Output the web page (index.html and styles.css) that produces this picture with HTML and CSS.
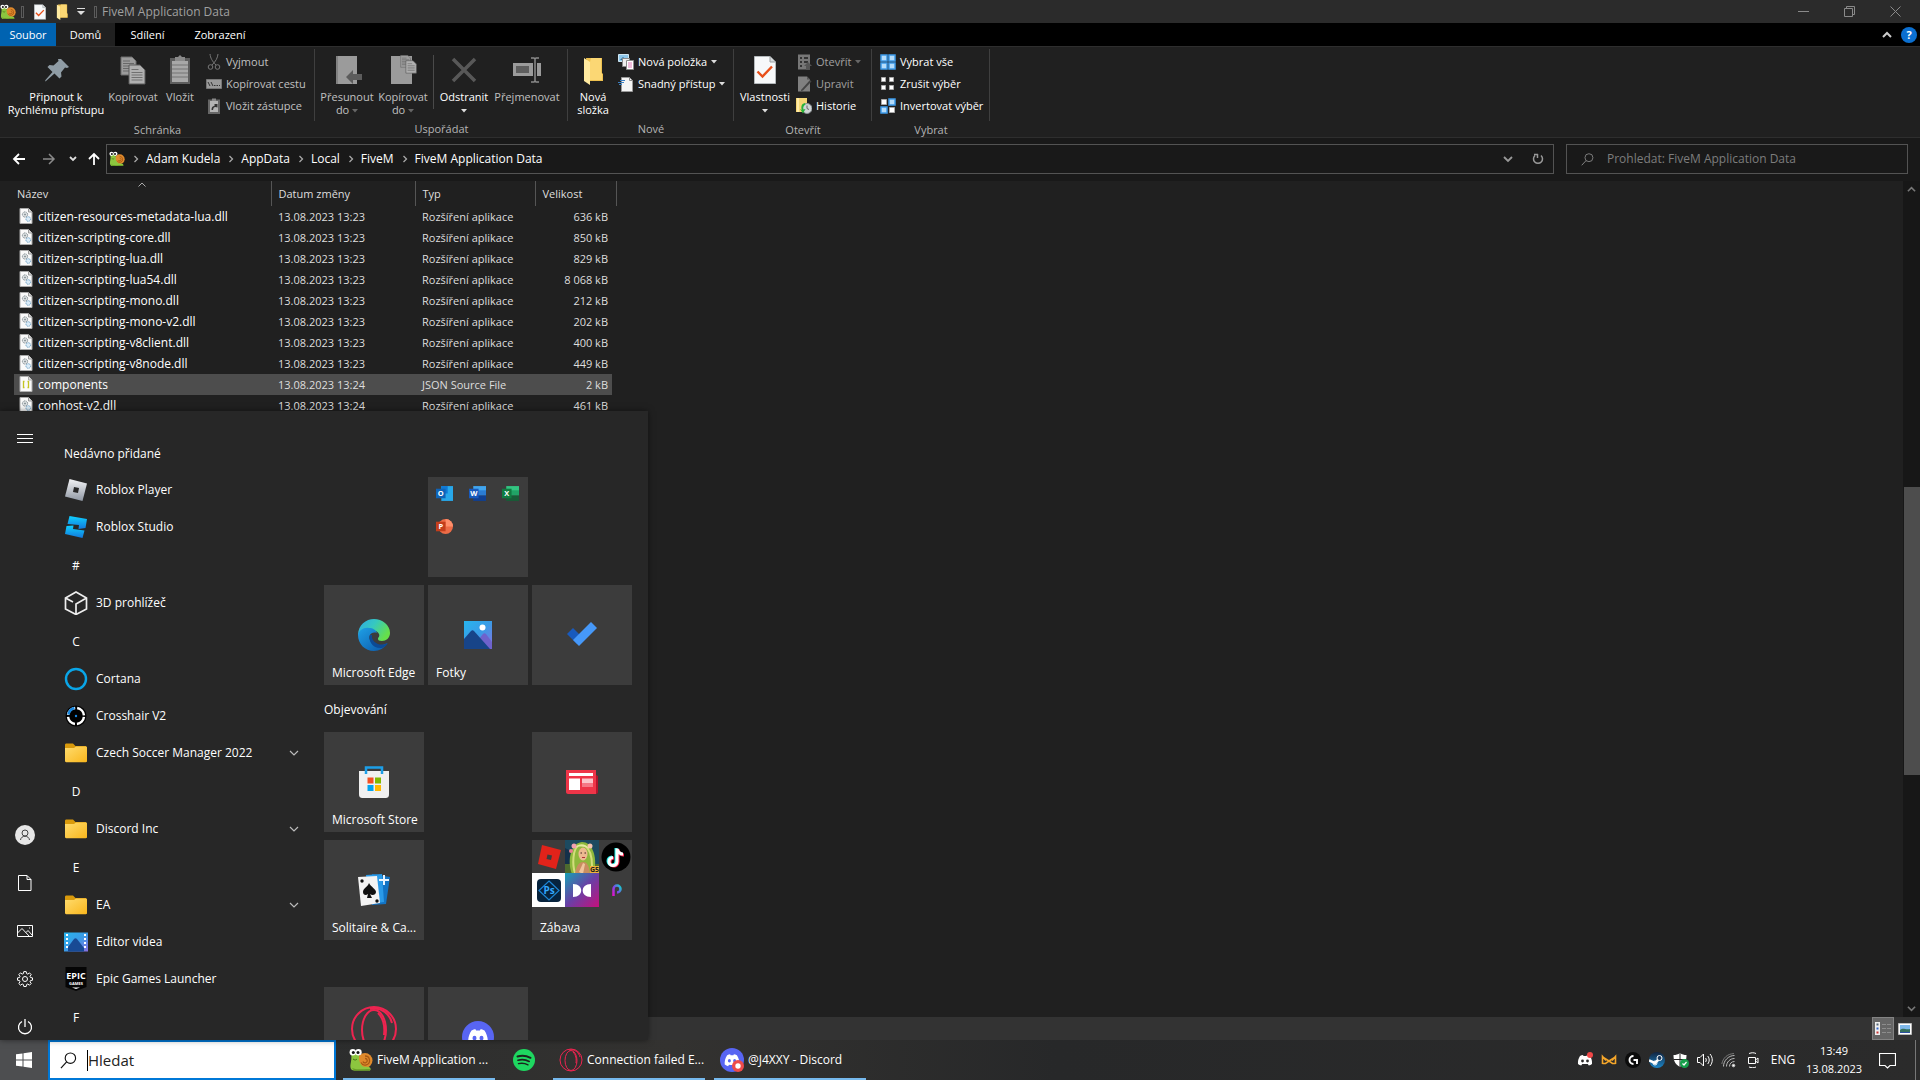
FILE: index.html
```html
<!DOCTYPE html>
<html lang="cs">
<head>
  <meta charset="UTF-8" />
  <meta name="viewport" content="width=device-width, initial-scale=1.0" />
  <title>FiveM Application Data</title>
  <link rel="stylesheet" href="styles.css">
</head>
<body>
  <!-- shared icons -->
  <svg class="defs" width="0" height="0" aria-hidden="true">
    <defs>
      <linearGradient id="gFolder" x1="0" y1="0" x2="1" y2="1"><stop offset="0" stop-color="#ffdc6e" /><stop offset="1" stop-color="#f9b61c" /></linearGradient>
      <linearGradient id="gSilver" x1="0" y1="0" x2="0" y2="1"><stop offset="0" stop-color="#f2f3f5" /><stop offset="1" stop-color="#8f97a3" /></linearGradient>
      <linearGradient id="gStudio" x1="0" y1="0" x2="0" y2="1"><stop offset="0" stop-color="#10d0ff" /><stop offset="1" stop-color="#1278dc" /></linearGradient>
      <linearGradient id="gPhoto" x1="0" y1="0" x2="1" y2="1"><stop offset="0" stop-color="#27b5ee" /><stop offset="0.5" stop-color="#3a9be6" /><stop offset="1" stop-color="#8a6fe0" /></linearGradient>
      <linearGradient id="gEdgeTop" x1="0" y1="0" x2="1" y2="0.5"><stop offset="0" stop-color="#2ea8e8" /><stop offset="0.5" stop-color="#36c8c0" /><stop offset="1" stop-color="#66e04a" /></linearGradient>
      <linearGradient id="gEdgeLow" x1="0" y1="0" x2="1" y2="1"><stop offset="0" stop-color="#1fa0e6" /><stop offset="1" stop-color="#0b57a8" /></linearGradient>
      <linearGradient id="gDolby" x1="0" y1="0" x2="1" y2="1"><stop offset="0" stop-color="#16a0b4" /><stop offset="0.5" stop-color="#6a3fa5" /><stop offset="1" stop-color="#c4107c" /></linearGradient>
      <linearGradient id="gPicsart" x1="0" y1="1" x2="1" y2="0"><stop offset="0" stop-color="#e411c8" /><stop offset="0.5" stop-color="#7a4be8" /><stop offset="1" stop-color="#10d4d0" /></linearGradient>
      <linearGradient id="gSteam" x1="0" y1="0" x2="0" y2="1"><stop offset="0" stop-color="#12243f" /><stop offset="1" stop-color="#1c86c8" /></linearGradient>
    </defs>
    <symbol id="snail" viewBox="0 0 24 24">
      <circle cx="16" cy="12.500" r="7.500" fill="#e08a2c" />
      <path d="M16 8a4.500 4.500 0 1 1-4 6.500M16 10.500a2.200 2.200 0 1 1-2 3" fill="none" stroke="#a85a14" stroke-width="1.300" />
      <path d="M2 5h8v5c0 3 1 6 4 8.500l6 .5c2 .5 2 3 1 3.500H5c-3 0-4-3-3.500-6C2 13 3 10 2 5z" fill="#8cc63f" />
      <path d="M3 20c4 2 9 1 18 1v1.500H5z" fill="#6aa028" />
      <circle cx="3.800" cy="4.200" r="3.200" fill="#fff" /><circle cx="9.500" cy="4.200" r="3.200" fill="#fff" />
      <circle cx="4.300" cy="4.400" r="1.500" fill="#111" /><circle cx="9" cy="4.400" r="1.500" fill="#111" />
      <path d="M4 11c2 1.500 3 1 4 0" stroke="#416b12" fill="none" />
    </symbol>
    <symbol id="docCheck" viewBox="0 0 22 28">
      <path d="M.5.500h15.500l5.500 5.500v21.500H.5z" fill="#f7f9fa" stroke="#b4b9bc" />
      <path d="M16 .5V6h5.500" fill="#d8dcde" stroke="#9aa0a3" />
      <path d="M3.500 15.500l5 5 9.500-10" fill="none" stroke="#e8501a" stroke-width="2.400" />
    </symbol>
    <symbol id="newFolder" viewBox="0 0 20 28">
      <path d="M3 1h16v15l1 1v7H6z" fill="#eec14f" />
      <path d="M1 1l6 4v23L1 24z" fill="#ffeaa0" /><path d="M7 5l1-4h10v14l1 2v6H7z" fill="#fbd774" />
    </symbol>
    <symbol id="dll" viewBox="0 0 13 16">
      <path d="M.5.500h8.500l3.500 3.500v11.500H.5z" fill="#fafafa" stroke="#a9a9a9" />
      <path d="M9 .5V4h3.500" fill="#ddd" stroke="#999" />
      <circle cx="5.500" cy="6.500" r="2.600" fill="#dfe3e5" stroke="#7b868c" stroke-dasharray="1.200 .6" />
      <circle cx="8.800" cy="11" r="2.300" fill="#dcecf8" stroke="#6ba0c6" stroke-dasharray="1.200 .6" />
      <path d="M4.500 6.500h2M5.500 5.500v2" stroke="#7b868c" stroke-width=".7" />
    </symbol>
    <symbol id="json" viewBox="0 0 13 16">
      <path d="M.5.500h8.500l3.500 3.500v11.500H.5z" fill="#fafafa" stroke="#b0b0b0" />
      <path d="M9 .5V4h3.500" fill="#ddd" stroke="#aaa" />
      <path d="M5 5.500H4v6h1M8 5.500h1v6H8" fill="none" stroke="#c3c421" stroke-width="1.300" />
    </symbol>
    <symbol id="crumb" viewBox="0 0 8 8"><path d="M2.500 1l3 3-3 3" fill="none" stroke="#a8a8a8" stroke-width="1.300" /></symbol>
    <symbol id="down" viewBox="0 0 10 10"><path d="M1 3l4 4 4-4" fill="none" stroke="currentColor" stroke-width="1.200" /></symbol>
    <symbol id="tri" viewBox="0 0 6 4"><path d="M0 0h6L3 3.500z" fill="currentColor" /></symbol>
    <symbol id="pages" viewBox="0 0 26 30">
      <path d="M1 2h11l4 4v14H1z" fill="#9c9c9c" stroke="#6d6d6d" /><path d="M3 6h7M3 8.500h11M3 11h11M3 13.500h11M3 16h11" stroke="#686868" />
      <path d="M9 10h11l5 5v14H9z" fill="#b0b0b0" stroke="#5a5a5a" /><path d="M11.500 14.500h7M11.500 17.500h11M11.500 20h11M11.500 22.500h11M11.500 25h11" stroke="#707070" />
    </symbol>
    <symbol id="folder" viewBox="0 0 24 24">
      <path d="M1 4c0-1 .5-1.500 1.500-1.500h6.500l2.500 2.500H22v5H1z" fill="#d99a0c" />
      <path d="M1 7h9l2-1.500h10c.7 0 1 .4 1 1V20c0 .8-.5 1.200-1.200 1.200H2.200C1.500 21.200 1 20.800 1 20z" fill="url(#gFolder)" />
    </symbol>
    <symbol id="discord" viewBox="0 0 32 32">
      <circle cx="16" cy="16" r="16" fill="#5865f2" />
      <path d="M9.500 9.500c1.500-.8 3-1.100 4-1.200l.6 1.200h3.800l.6-1.200c1 .1 2.500.4 4 1.200 2.600 4 3.600 8 3.200 12.500-1.600 1.200-3 1.800-4.500 2.200l-1.200-2c-2.600.7-5.400.7-8 0l-1.200 2c-1.500-.4-2.900-1-4.500-2.200-.4-4.500.6-8.500 3.200-12.500z" fill="#fff" />
      <ellipse cx="12.500" cy="17" rx="2" ry="2.300" fill="#5865f2" /><ellipse cx="19.500" cy="17" rx="2" ry="2.300" fill="#5865f2" />
    </symbol>
    <symbol id="opera" viewBox="0 0 48 48">
      <g fill="none" stroke="#ee2450" stroke-width="2"><circle cx="24" cy="24" r="22" /><ellipse cx="24" cy="25" rx="12" ry="20" /><path d="M20 4c12-3 20 6 22 14M28 8c6 6 7 14 6 22" /></g>
    </symbol>
    <symbol id="search" viewBox="0 0 18 18"><circle cx="11" cy="6.500" r="5.500" fill="none" stroke="currentColor" stroke-width="1.200" /><path d="M7 10.500L1 17" stroke="currentColor" stroke-width="1.300" /></symbol>
  </svg>

  <main class="window">
    <header class="titlebar">
      <svg class="i16"><use href="#snail" /></svg>
      <span class="bar"></span>
      <button class="quick" aria-label="Vlastnosti"><svg width="12" height="16"><use href="#docCheck" /></svg></button>
      <button class="quick" aria-label="Nová složka"><svg width="14" height="16"><use href="#newFolder" /></svg></button>
      <button class="quick quick-more" aria-label="Přizpůsobit"><svg width="8" height="7" viewBox="0 0 8 7"><path d="M0 .5h8" stroke="#ddd" /><path d="M0 3h8L4 7z" fill="#ddd" /></svg></button>
      <span class="bar"></span>
      <h1>FiveM Application Data</h1>
      <div class="controls">
        <button aria-label="Minimalizovat"><svg width="11" height="11" viewBox="0 0 11 11"><path d="M0 5.500h11" stroke="#8a8a8a" /></svg></button>
        <button aria-label="Obnovit"><svg width="11" height="11" viewBox="0 0 11 11" fill="none" stroke="#8a8a8a"><path d="M.5 2.500h8v8h-8zM2.500 2.500v-2h8v8h-2" /></svg></button>
        <button aria-label="Zavřít"><svg width="11" height="11" viewBox="0 0 11 11"><path d="M.5.500l10 10M10.500.500l-10 10" stroke="#8a8a8a" /></svg></button>
      </div>
    </header>

    <nav class="tabs">
      <button class="tab tab-file">Soubor</button>
      <button class="tab tab-active">Domů</button>
      <button class="tab">Sdílení</button>
      <button class="tab tab-wide">Zobrazení</button>
      <div class="tabs-end">
        <button aria-label="Sbalit pás karet"><svg width="10" height="8" viewBox="0 0 10 8"><path d="M1 6l4-4 4 4" fill="none" stroke="#ccc" stroke-width="2" /></svg></button>
        <button class="help" aria-label="Nápověda">?</button>
      </div>
    </nav>

    <section class="ribbon">
      <div class="group g-clipboard">
        <div class="tools">
          <button class="big w-pin on"><svg viewBox="0 0 32 32"><path d="M21 5l8 8-2 1-2-.5-4 5 .5 4-2 2-5-5L6 27l-1 .5.5-1.500 7-8-5-5 2-2 4 .5 5-4.500-.5-2z" fill="#8f9ca5" /></svg><span>Připnout k<br>Rychlému přístupu</span></button>
          <button class="big w-copy"><svg viewBox="0 0 32 32"><use href="#pages" x="3" y="1" width="26" height="30" /></svg><span>Kopírovat</span></button>
          <button class="big w-paste"><svg viewBox="0 0 32 32"><path d="M6 4h20v26H6z" fill="#5d5d5d" /><path d="M8 7h16v21H8z" fill="#a8a8a8" /><path d="M11 3h3l2-2 2 2h3v4H11z" fill="#8a8a8a" /><path d="M8 11h16M8 15h16M8 19h16M8 23h16" stroke="#747474" /></svg><span>Vložit</span></button>
          <div class="stack">
            <button class="small"><svg viewBox="0 0 16 16" fill="none" stroke="#777"><path d="M4 0c.5 4 2 7 6 11M12 0c-.5 4-2 7-6 11" /><circle cx="4.500" cy="13" r="2.300" /><circle cx="11.500" cy="13" r="2.300" /></svg>Vyjmout</button>
            <button class="small"><svg viewBox="0 0 16 16"><path d="M.5 3.500h15v9H.5z" fill="#9a9a9a" stroke="#777" /><path d="M2 6l2 4M5 6l2 4M8 9.500h1.500M10.500 9.500H12M13 9.500h1" stroke="#333" /></svg>Kopírovat cestu</button>
            <button class="small"><svg viewBox="0 0 16 16"><path d="M2 1.500h12V16H2z" fill="#666" /><path d="M4 3h8v11H4z" fill="#b4b4b4" /><path d="M6 .5h4V3H6z" fill="#888" /><path d="M5.500 12c0-3 1-4 3-4V6l3 0v3.500L9.500 9c-2 0-2 1-2.500 3z" fill="#333" /></svg>Vložit zástupce</button>
          </div>
        </div>
        <p>Schránka</p>
      </div>

      <div class="group g-organize">
        <div class="tools">
          <button class="big w-move"><svg viewBox="0 0 32 32"><path d="M5 2h21v28H5z" fill="#9b9b9b" /><path d="M5 2h2v28H5z" fill="#828282" /><path d="M15 23l7-7v4h9v6h-9v4z" fill="#5c5c5c" /></svg><span>Přesunout<br>do <svg class="tri"><use href="#tri" /></svg></span></button>
          <button class="big w-move"><svg viewBox="0 0 32 32"><path d="M4 2h21v28H4z" fill="#9b9b9b" /><use href="#pages" x="13" y="0" width="17" height="20" /></svg><span>Kopírovat<br>do <svg class="tri"><use href="#tri" /></svg></span></button>
          <span class="split"></span>
          <button class="big w-move on"><svg viewBox="0 0 32 32"><path d="M5 5l22 22M27 5L5 27" stroke="#585858" stroke-width="3.500" /></svg><span>Odstranit<br><svg class="tri"><use href="#tri" /></svg></span></button>
          <button class="big w-rename"><svg viewBox="0 0 32 32"><path d="M2 9h20v13H2zM26 9h4v13h-4z" fill="#9b9b9b" /><path d="M5 12h13v7H5z" fill="#5e5e5e" /><path d="M20 4h3l1 1 1-1h3M20 28h3l1-1 1 1h3M24 5v22" fill="none" stroke="#8a8a8a" stroke-width="1.500" /></svg><span>Přejmenovat</span></button>
        </div>
        <p>Uspořádat</p>
      </div>

      <div class="group g-new">
        <div class="tools">
          <button class="big w-new on"><svg viewBox="0 0 32 32"><use href="#newFolder" x="6" y="3" width="20" height="28" /></svg><span>Nová<br>složka</span></button>
          <div class="stack">
            <button class="small on"><svg viewBox="0 0 16 16"><path d="M.5.500h10v7H.5z" fill="#8ec7ea" stroke="#cfe6f3" /><path d="M2 6l3-3 3 3z" fill="#2b6d97" /><path d="M4.500 4.500h7v8h-7z" fill="#eee" stroke="#8a8a8a" /><path d="M8.500 6.500h7v9h-7z" fill="#fff" stroke="#8a8a8a" /><path d="M10 9h4M10 11h4M10 13h4" stroke="#c28" stroke-width=".6" /></svg>Nová položka <svg class="tri"><use href="#tri" /></svg></button>
            <button class="small on"><svg viewBox="0 0 16 16"><path d="M3.500 1.500h8l3 3v11h-11z" fill="#f5f5f5" stroke="#999" /><path d="M11.500 1.500v3h3" fill="none" stroke="#888" /><path d="M2 4.500h5M0 6.500h6M1 8.500h3" stroke="#3c7fc0" /></svg>Snadný přístup <svg class="tri"><use href="#tri" /></svg></button>
          </div>
        </div>
        <p>Nové</p>
      </div>

      <div class="group g-open">
        <div class="tools">
          <button class="big w-props on"><svg viewBox="0 0 32 32"><use href="#docCheck" x="5" y="2" width="22" height="28" /></svg><span>Vlastnosti<br><svg class="tri"><use href="#tri" /></svg></span></button>
          <div class="stack">
            <button class="small off"><svg viewBox="0 0 16 16"><path d="M2 .5h12v15H2z" fill="#777" /><path d="M4 3h2v2H4zM4 7h2v2H4zM4 11h2v2H4zM8 3h4v2H8zM8 7h4v2H8z" fill="#333" /><path d="M12 8l4 4h-2v4h-4v-4H8z" fill="#555" /></svg>Otevřít <svg class="tri"><use href="#tri" /></svg></button>
            <button class="small off"><svg viewBox="0 0 16 16"><path d="M2 .5h9l3 3v12H2z" fill="#808080" /><path d="M11 .5v3h3" fill="#555" /><path d="M5 14l9-10 1.500 1.500L7 14.500l-2 .5z" fill="#444" /></svg>Upravit</button>
            <button class="small on"><svg viewBox="0 0 16 16"><path d="M0 0h11v14H0z" fill="#f5d675" /><path d="M1 0h2v14H1z" fill="#ffeaa5" /><circle cx="11" cy="10.500" r="5" fill="#cfd4d6" stroke="#8b9194" /><path d="M11 7.500v3l2 1" fill="none" stroke="#666" /><path d="M9 5c-4 1-4 4-3 7l-2-1 3 4.500L9.500 11l-2 .5c-.7-2 0-4 2-5z" fill="#29b33b" /></svg>Historie</button>
          </div>
        </div>
        <p>Otevřít</p>
      </div>

      <div class="group g-select">
        <div class="tools">
          <div class="stack">
            <button class="small on"><svg viewBox="0 0 16 16" fill="#b5dcfa" stroke="#3d9bea" stroke-width="1.500"><path d="M1 1h6v6H1zM9 1h6v6H9zM1 9h6v6H1zM9 9h6v6H9z" /></svg>Vybrat vše</button>
            <button class="small on"><svg viewBox="0 0 16 16" fill="#fff" stroke="#aaa"><path d="M1.500 1.500h4v4h-4zM9.500 1.500h4v4h-4zM1.500 9.500h4v4h-4zM9.500 9.500h4v4h-4z" /></svg>Zrušit výběr</button>
            <button class="small on"><svg viewBox="0 0 16 16"><path d="M1.500 1.500h5v5h-5zM9.500 9.500h5v5h-5z" fill="#fff" stroke="#aaa" /><path d="M9 1h6v6H9zM1 9h6v6H1z" fill="#b5dcfa" stroke="#3d9bea" stroke-width="1.500" /></svg>Invertovat výběr</button>
          </div>
        </div>
        <p>Vybrat</p>
      </div>
    </section>

    <section class="address">
      <div class="nav-buttons">
        <button aria-label="Zpět"><svg width="14" height="14" viewBox="0 0 14 14"><path d="M13 7H2M7 2L2 7l5 5" fill="none" stroke="#fff" stroke-width="1.800" /></svg></button>
        <button aria-label="Vpřed"><svg width="14" height="14" viewBox="0 0 14 14"><path d="M1 7h11M7 2l5 5-5 5" fill="none" stroke="#8a8a8a" stroke-width="1.500" /></svg></button>
        <button class="recent" aria-label="Poslední umístění"><svg width="8" height="8" viewBox="0 0 8 8"><path d="M1 2l3 3 3-3" fill="none" stroke="#ddd" stroke-width="1.800" /></svg></button>
        <button class="up" aria-label="Nahoru"><svg width="14" height="14" viewBox="0 0 14 14"><path d="M7 13V2M2 7l5-5 5 5" fill="none" stroke="#fff" stroke-width="1.800" /></svg></button>
      </div>
      <div class="path">
        <svg class="i16"><use href="#snail" /></svg>
        <svg class="sep"><use href="#crumb" /></svg><button>Adam Kudela</button>
        <svg class="sep"><use href="#crumb" /></svg><button>AppData</button>
        <svg class="sep"><use href="#crumb" /></svg><button>Local</button>
        <svg class="sep"><use href="#crumb" /></svg><button>FiveM</button>
        <svg class="sep"><use href="#crumb" /></svg><button>FiveM Application Data</button>
        <div class="path-end">
          <button aria-label="Předchozí umístění"><svg width="10" height="10" viewBox="0 0 10 10"><path d="M1 3l4 4 4-4" fill="none" stroke="#999" stroke-width="1.800" /></svg></button>
          <button aria-label="Aktualizovat"><svg width="12" height="12" viewBox="0 0 12 12"><path d="M3 2.500a4.500 4.500 0 1 0 6 0M2 1.500h4M5.500 1v4" fill="none" stroke="#999" stroke-width="1.500" /></svg></button>
        </div>
      </div>
      <label class="filter">
        <svg width="13" height="13"><use href="#search" /></svg>
        <input type="search" placeholder="Prohledat: FiveM Application Data" aria-label="Prohledat: FiveM Application Data">
      </label>
    </section>

    <section class="content">
      <div class="files">
        <table>
          <colgroup><col class="c-name"><col class="c-date"><col class="c-type"><col class="c-size"><col class="c-end"></colgroup>
          <thead>
            <tr><th><svg class="sort" viewBox="0 0 8 5"><path d="M.5 4.500L4 1l3.500 3.500" fill="none" stroke="#aaa" /></svg>Název</th><th>Datum změny</th><th>Typ</th><th colspan="2">Velikost</th></tr>
          </thead>
          <tbody>
            <tr><td><svg><use href="#dll" /></svg>citizen-resources-metadata-lua.dll</td><td>13.08.2023 13:23</td><td>Rozšíření aplikace</td><td>636 kB</td></tr>
            <tr><td><svg><use href="#dll" /></svg>citizen-scripting-core.dll</td><td>13.08.2023 13:23</td><td>Rozšíření aplikace</td><td>850 kB</td></tr>
            <tr><td><svg><use href="#dll" /></svg>citizen-scripting-lua.dll</td><td>13.08.2023 13:23</td><td>Rozšíření aplikace</td><td>829 kB</td></tr>
            <tr><td><svg><use href="#dll" /></svg>citizen-scripting-lua54.dll</td><td>13.08.2023 13:23</td><td>Rozšíření aplikace</td><td>8 068 kB</td></tr>
            <tr><td><svg><use href="#dll" /></svg>citizen-scripting-mono.dll</td><td>13.08.2023 13:23</td><td>Rozšíření aplikace</td><td>212 kB</td></tr>
            <tr><td><svg><use href="#dll" /></svg>citizen-scripting-mono-v2.dll</td><td>13.08.2023 13:23</td><td>Rozšíření aplikace</td><td>202 kB</td></tr>
            <tr><td><svg><use href="#dll" /></svg>citizen-scripting-v8client.dll</td><td>13.08.2023 13:23</td><td>Rozšíření aplikace</td><td>400 kB</td></tr>
            <tr><td><svg><use href="#dll" /></svg>citizen-scripting-v8node.dll</td><td>13.08.2023 13:23</td><td>Rozšíření aplikace</td><td>449 kB</td></tr>
            <tr class="selected"><td><svg><use href="#json" /></svg>components</td><td>13.08.2023 13:24</td><td>JSON Source File</td><td>2 kB</td></tr>
            <tr><td><svg><use href="#dll" /></svg>conhost-v2.dll</td><td>13.08.2023 13:24</td><td>Rozšíření aplikace</td><td>461 kB</td></tr>
          </tbody>
        </table>
      </div>
      <div class="scrollbar">
        <svg viewBox="0 0 10 10"><path d="M1 7l4-4 4 4" fill="none" stroke="#777" stroke-width="1.800" /></svg>
        <div class="track"><div class="thumb"></div></div>
        <svg viewBox="0 0 10 10"><path d="M1 3l4 4 4-4" fill="none" stroke="#777" stroke-width="1.800" /></svg>
      </div>
    </section>

    <footer class="status">
      <button class="view view-active" aria-label="Podrobnosti"><svg width="16" height="13" viewBox="0 0 16 13"><path d="M0 0h5v13H0z" fill="#eee" /><path d="M1.500 1.500h2v2h-2z" fill="#567" /><path d="M1.500 5.500h2v2h-2z" fill="#36c" /><path d="M1.500 9.500h2v2h-2z" fill="#c33" /><path d="M7 2.500h4M12 2.500h4M7 6.500h4M12 6.500h4M7 10.500h4M12 10.500h4" stroke="#8c8c8c" /></svg></button>
      <button class="view" aria-label="Velké ikony"><svg width="14" height="12" viewBox="0 0 14 12"><path d="M.5.500h13v11H.5z" fill="#fff" stroke="#bbb" /><path d="M2 2h10v8H2z" fill="#7fb8ea" /><path d="M2 7c3-3 5 0 10-1v4H2z" fill="#35705e" /><path d="M2 9h10v1H2z" fill="#2b4fa0" /></svg></button>
    </footer>

    <aside class="start">
      <div class="start-inner">
        <nav class="rail">
          <button class="menu" aria-label="Rozbalit"><svg width="16" height="10" viewBox="0 0 16 10"><path d="M0 .5h16M0 4.500h16M0 8.500h16" stroke="#fff" /></svg></button>
          <button aria-label="Účet"><svg width="20" height="20" viewBox="0 0 20 20"><circle cx="10" cy="10" r="10" fill="#e6e6e6" /><circle cx="10" cy="8" r="3" fill="none" stroke="#444" /><path d="M5.500 15c.5-5 8.500-5 9 0" fill="none" stroke="#444" /></svg></button>
          <button aria-label="Dokumenty"><svg width="14" height="16" viewBox="0 0 14 16"><path d="M.5.500h8.500l4 4v11H.5zM9 .5v4h4" fill="none" stroke="#fff" /></svg></button>
          <button aria-label="Obrázky"><svg width="16" height="12" viewBox="0 0 16 12"><path d="M.5.500h15v11H.5zM.5 8l4.500-4.500 7.500 8M9 7.500l2-2 4.500 5" fill="none" stroke="#fff" /><path d="M12 3h1" stroke="#fff" /></svg></button>
          <button aria-label="Nastavení"><svg width="16" height="16" viewBox="0 0 16 16" fill="none" stroke="#fff"><path d="M6.800.6h2.400l.4 2 1.200.5 1.700-1.200 1.700 1.700L13 5.300l.5 1.200 2 .4v2.300l-2 .4-.5 1.200 1.200 1.700-1.700 1.700-1.700-1.200-1.200.5-.4 2H6.800l-.4-2-1.200-.5-1.700 1.200-1.700-1.700L3 10.800l-.5-1.200-2-.4V6.900l2-.4L3 5.300 1.800 3.600l1.700-1.700 1.700 1.200 1.200-.5z" /><circle cx="8" cy="8" r="2.500" /></svg></button>
          <button aria-label="Napájení"><svg width="16" height="18" viewBox="0 0 16 18" fill="none" stroke="#fff" stroke-width="1.300"><path d="M8 1v8M5 3.500a6.500 6.500 0 1 0 6 0" /></svg></button>
        </nav>

        <div class="apps">
          <h2>Nedávno přidané</h2>
          <button class="app"><svg viewBox="0 0 24 24"><path d="M5.500 1L23 5.500 18.500 23 1 18.500z" fill="url(#gSilver)" /><path d="M10 9l5 1-1 5-5-1z" fill="#272727" /></svg>Roblox Player</button>
          <button class="app"><svg viewBox="0 0 24 24"><path d="M5.500 1L23 4l-1.500 9-7 1 .5-4-11.500-1z" fill="url(#gStudio)" /><path d="M2.500 11l7-.5-.5 3.500 11.500 1.500-2 7.500L1 19z" fill="url(#gStudio)" /></svg>Roblox Studio</button>
          <button class="letter">#</button>
          <button class="app"><svg viewBox="0 0 24 24" fill="none" stroke="#eee" stroke-width="1.700"><path d="M12 1l10.500 6v11L12 23.500 1.500 18V7zM1.500 7L9 11M12 23V13l10.500-6" /></svg>3D prohlížeč</button>
          <button class="letter">C</button>
          <button class="app"><svg viewBox="0 0 24 24"><circle cx="12" cy="12" r="10" fill="none" stroke="#0aa6e8" stroke-width="2.400" /></svg>Cortana</button>
          <button class="app"><svg viewBox="0 0 24 24"><circle cx="12" cy="12" r="10.500" fill="#000" /><g fill="none" stroke-width="2.500"><circle cx="12" cy="12" r="8" stroke="#fff" stroke-dasharray="10.500 2.060" stroke-dashoffset="-1" /><path d="M4.500 10.500a8 8 0 0 1 6-6.500" stroke="#1787e0" /></g><circle cx="12" cy="12" r="1.200" fill="#1787e0" /></svg>Crosshair V2</button>
          <button class="app"><svg viewBox="0 0 24 24"><use href="#folder" /></svg>Czech Soccer Manager 2022<svg class="more"><use href="#down" /></svg></button>
          <button class="letter">D</button>
          <button class="app"><svg viewBox="0 0 24 24"><use href="#folder" /></svg>Discord Inc<svg class="more"><use href="#down" /></svg></button>
          <button class="letter">E</button>
          <button class="app"><svg viewBox="0 0 24 24"><use href="#folder" /></svg>EA<svg class="more"><use href="#down" /></svg></button>
          <button class="app"><svg viewBox="0 0 24 24"><path d="M0 2.500h24v19H0z" fill="url(#gPhoto)" /><path d="M4 17l6-8c1-1 2-1 3 0l7 9v3.500H4z" fill="#184a94" /><path d="M3 4v16M21 4v16" stroke="#fff" stroke-width="2" stroke-dasharray="2 2" /></svg>Editor videa</button>
          <button class="app"><svg viewBox="0 0 24 24"><path d="M1.500 0h21v20L12 24 1.500 20z" fill="#050505" /><path d="M8 20.500l4 1.500 4-1.500z" fill="#fff" /><text x="12" y="12" class="logo-text" font-size="9" fill="#fff">EPIC</text><text x="12" y="18" class="logo-text" font-size="4" fill="#fff">GAMES</text></svg>Epic Games Launcher</button>
          <button class="letter">F</button>
        </div>

        <div class="tiles">
          <h2></h2>
          <div class="tile-grid">
            <button class="tile col-2 folder-tile" aria-label="Office">
              <svg viewBox="0 0 16 16"><path d="M5 1h11v14H5z" fill="#28a8ea" /><path d="M5 1h6v7H5z" fill="#0f78d4" /><path d="M0 3.500h9v9H0z" fill="#0f64b8" /><text x="4.500" y="10.500" class="logo-text" font-size="7" fill="#fff">O</text></svg>
              <svg viewBox="0 0 16 16"><path d="M4 1h12v5H4z" fill="#41a5ee" /><path d="M4 5h12v5H4z" fill="#2b7cd3" /><path d="M4 10h12v5H4z" fill="#103f91" /><path d="M0 3.500h9v9H0z" fill="#185abd" /><text x="4.500" y="10.500" class="logo-text" font-size="7" fill="#fff">W</text></svg>
              <svg viewBox="0 0 16 16"><path d="M4 1h12v5H4z" fill="#33c481" /><path d="M4 5h12v5H4z" fill="#21a366" /><path d="M4 10h12v5H4z" fill="#185c37" /><path d="M0 3.500h9v9H0z" fill="#107c41" /><text x="4.500" y="10.500" class="logo-text" font-size="7" fill="#fff">X</text></svg>
              <svg viewBox="0 0 16 16"><circle cx="9" cy="8" r="7" fill="#ed6c47" /><path d="M9 1a7 7 0 0 1 7 7H9z" fill="#ff8f6b" /><path d="M0 3.500h9v9H0z" fill="#c43e1c" /><text x="4.500" y="10.500" class="logo-text" font-size="7" fill="#fff">P</text></svg>
            </button>
            <button class="tile col-1"><svg viewBox="0 0 32 32"><path d="M0 16C0 6 8 0 16 0s16 6 16 14c0 5-4 8-8 8-3 0-4-1-4-2 0-2 2-2 1-5-1-3-5-4-8-3C6 13 3 16 0 16z" fill="url(#gEdgeTop)" /><path d="M0 16c1-5 6-8 11-7 4 0 7 2 8 5-6-2-9 3-7 7 3 6 11 7 17 3-2 5-8 8-13 8C7 32 0 25 0 16z" fill="url(#gEdgeLow)" /><path d="M12 16c-2 5 2 14 12 13 3-1 5-3 6-5-7 4-17 0-16-8z" fill="#0c4a95" /></svg><span>Microsoft Edge</span></button>
            <button class="tile col-2"><svg viewBox="0 0 32 32"><path d="M2 2h28v28H2z" fill="url(#gPhoto)" /><path d="M17 20l4-5c1-1 2-1 3 0l6 8v7H17z" fill="#6e62cc" /><path d="M2 20l7-8c1-1 2-1 3 0l16 18H2z" fill="#174488" /><circle cx="20.500" cy="8.500" r="3" fill="#fff" /></svg><span>Fotky</span></button>
            <button class="tile col-3" aria-label="To Do"><svg viewBox="0 0 32 32"><path d="M1 15l6-6 10 10-6 6z" fill="#185abd" /><path d="M7 21L25 3l6 6-18 18z" fill="#4698f8" /></svg></button>
          </div>
          <h2>Objevování</h2>
          <div class="tile-grid">
            <button class="tile col-1"><svg viewBox="0 0 32 32"><path d="M1 5h30v23c0 3-1 4-4 4H5c-3 0-4-1-4-4z" fill="#f0f0f0" /><path d="M8 8V1.500h16V8" fill="none" stroke="#1c9fe8" stroke-width="2.500" /><path d="M9.500 11.500h6v6h-6z" fill="#f25022" /><path d="M17 11.500h6v6h-6z" fill="#7fba00" /><path d="M9.500 19h6v6h-6z" fill="#00a4ef" /><path d="M17 19h6v6h-6z" fill="#ffb900" /></svg><span>Microsoft Store</span></button>
            <button class="tile col-3" aria-label="Zprávy"><svg viewBox="0 0 32 32"><path d="M28 8l4 2v16c0 1-1 2-2 2H5z" fill="#b3142c" /><path d="M0 4h30v24H2c-1 0-2-1-2-2z" fill="#ee3548" /><path d="M3 7h24v3H3zM3 12.500h11V24H3z" fill="#fff" /><path d="M16 12.500h11V17H16z" fill="#fbc5cb" /><path d="M16 17h11v4H16z" fill="#f57886" /></svg></button>
            <button class="tile col-1"><svg viewBox="0 0 32 32"><path d="M14 0l18 3-4 27-14 1z" fill="#1273c4" /><path d="M8 1l16-1 2 28-16 2z" fill="#2a9ae8" /><path d="M0 3l19-1 3 27-19 3z" fill="#f4f4f4" /><path d="M11 9c2 4 7 6 7 9 0 3-4 4-6 2l2 4H9l1-4c-2 2-5 1-5-2 0-4 5-5 6-9z" fill="#111" /><circle cx="4" cy="7" r="1.700" fill="#111" /><circle cx="19" cy="27" r="1.700" fill="#111" /><path d="M26 1v10M21 6h10" stroke="#e8f4ff" stroke-width="2" /></svg><span>Solitaire &amp; Ca...</span></button>
            <button class="tile col-3 fun-tile">
              <svg viewBox="0 0 34 34"><path d="M10 5l19 5-5 19-18-5z" fill="#e2231a" /><path d="M15.500 14.500l4.500 1-1 4.500-4.500-1z" fill="#3c3c3c" /></svg>
              <svg viewBox="0 0 34 34"><path d="M0 0h34v34H0z" fill="#1c4a60" /><path d="M0 8l6 3v14H0z" fill="#14304a" /><path d="M0 24h34v10H0z" fill="#4d6b2f" /><path d="M7 34C2 22 5 3 17 2c10 0 14 13 13 24l-5 8z" fill="#8fb83c" /><path d="M10 33C7 24 8 9 13 6M27 26c0-8-2-17-7-20" fill="none" stroke="#d3dd7c" stroke-width="2" /><path d="M10 8c3-5 11-5 14 1-4-3-10-3-14-1z" fill="#e3eaa0" /><ellipse cx="18" cy="14" rx="4.500" ry="6.500" fill="#edb990" /><path d="M10 34c1-8 4-12 8-12s6 3 7 12z" fill="#c98d60" /><path d="M14 32l4-9 2 1-2 10z" fill="#f0c49c" /><circle cx="9" cy="6" r="2.500" fill="#f2a0ae" /><circle cx="25" cy="6" r="2.500" fill="#f5c3b0" /><circle cx="6" cy="11" r="2" fill="#e87f90" /><path d="M15.500 13h1.500M19.500 13H21" stroke="#422" /><path d="M17 17.500h3" stroke="#b3303a" /><path d="M25 26h9v7h-9z" fill="#efb23a" /><text x="29.500" y="32" class="logo-text" font-size="7" fill="#222">G5</text></svg>
              <svg viewBox="0 0 34 34"><circle cx="17" cy="17" r="14.500" fill="#000" /><g fill="none" stroke-width="3"><path d="M17 8v13a4 4 0 1 1-4-4M17 9c1 3 3 5 6 5" stroke="#25f4ee" /><path d="M19 9v13a4 4 0 1 1-4-4M19 10c1 3 3 5 6 5" stroke="#fe2c55" /><path d="M18 8.500v13a4 4 0 1 1-4-4M18 9c1 3 3 5 6 5" stroke="#fff" /></g></svg>
              <svg viewBox="0 0 34 34"><path d="M0 0h34v34H0z" fill="#fff" /><rect x="5" y="6" width="24" height="23" rx="4" fill="#07233d" /><path d="M17 8l10 9.500L17 27 7 17.500z" fill="none" stroke="#1d85d4" stroke-width="1.200" /><text x="17" y="21" class="logo-text" font-size="10" fill="#31a8ff">Ps</text></svg>
              <svg viewBox="0 0 34 34"><path d="M0 0h34v34H0z" fill="url(#gDolby)" /><path d="M8 11c11 0 11 13 0 13zM26 11c-11 0-11 13 0 13z" fill="#fff" /></svg>
              <svg viewBox="0 0 34 34"><path d="M14.500 23V16a3.500 3.500 0 1 1 3.500 3.500" fill="none" stroke="url(#gPicsart)" stroke-width="2.500" /></svg>
              <span>Zábava</span>
            </button>
          </div>
          <h2></h2>
          <div class="tile-grid">
            <button class="tile col-1 wide-icon" aria-label="Opera GX"><svg viewBox="0 0 48 64"><use href="#opera" width="48" height="48" /></svg></button>
            <button class="tile col-2" aria-label="Discord"><svg viewBox="0 0 32 32"><use href="#discord" /></svg></button>
          </div>
        </div>
      </div>
    </aside>
  </main>

  <footer class="taskbar">
    <button class="win" aria-label="Start"><svg width="16" height="16" viewBox="0 0 16 16"><path d="M0 2.300l6.500-.9v6.100H0zM7.500 1.200L16 0v7.500H7.500zM0 8.500h6.500v6.100L0 13.700zM7.500 8.500H16V16l-8.500-1.200z" fill="#fff" /></svg></button>
    <label class="find"><svg width="17" height="17"><use href="#search" /></svg><input type="text" placeholder="Hledat" aria-label="Hledat"></label>
    <div class="tasks">
      <button class="task"><svg><use href="#snail" /></svg>FiveM Application ...</button>
      <button class="task task-pin" aria-label="Spotify"><svg viewBox="0 0 24 24"><circle cx="12" cy="12" r="11" fill="#1ed760" /><g fill="none" stroke="#1b241e" stroke-linecap="round"><path d="M5.500 8.500c4-1.200 9-.8 13 1.300" stroke-width="2" /><path d="M6 12.200c4-1 8-.5 11.200 1.200" stroke-width="1.700" /><path d="M6.500 15.600c3.500-.8 6.500-.4 9.500 1.200" stroke-width="1.400" /></g></svg></button>
      <button class="task"><svg><use href="#opera" /></svg>Connection failed E...</button>
      <button class="task task-last"><svg viewBox="0 0 24 24"><use href="#discord" /><circle cx="18" cy="18" r="6" fill="#ed4b4b" /><circle cx="18" cy="18" r="2.700" fill="#fff" /></svg>@J4XXY - Discord</button>
    </div>
    <div class="tray">
      <button aria-label="Discord"><svg viewBox="0 0 16 16"><path d="M3 4c1-.6 2-.8 3-1l.5 1h3l.5-1c1 .2 2 .4 3 1 1.600 2.500 2.300 5 2 8-1 .8-2 1.300-3.200 1.500l-1-1.500H5.200l-1 1.500C3 13.300 2 12.800 1 12c-.3-3 .4-5.500 2-8z" fill="#fff" /><circle cx="5.500" cy="9" r="1.400" fill="#2b2b2b" /><circle cx="10.500" cy="9" r="1.400" fill="#2b2b2b" /><circle cx="13" cy="3" r="3" fill="#f04747" /></svg></button>
      <button aria-label="MuteMe"><svg viewBox="0 0 16 16"><path d="M1.500 12V4.500l3.500 4M14.500 12V4.500L11 8.500M1.500 5L8 9l6.500-4M1.500 11.500h3L8 9l3.500 2.500h3" fill="none" stroke="#f5a62a" stroke-width="1.600" /></svg></button>
      <button aria-label="Logitech G"><svg viewBox="0 0 16 16"><circle cx="8" cy="8" r="8" fill="#0c0c0c" /><path d="M8.500 4a4 4 0 1 0 0 8M8.500 8H12v4" fill="none" stroke="#fff" stroke-width="1.900" /></svg></button>
      <button aria-label="Steam"><svg viewBox="0 0 16 16"><circle cx="8" cy="8" r="8" fill="url(#gSteam)" /><path d="M0 8.500l6 2.500 4-4" stroke="#fff" stroke-width="2.500" fill="none" /><circle cx="10.500" cy="6" r="2.500" fill="#1a3a5c" stroke="#fff" /><circle cx="6" cy="11" r="2" fill="none" stroke="#fff" /></svg></button>
      <button aria-label="Zabezpečení"><svg viewBox="0 0 16 16"><path d="M7 1C5 2.500 3 3 .5 3c0 5 1 9 6.500 12 5.500-3 6.500-7 6.500-12C11 3 9 2.500 7 1z" fill="#fff" /><path d="M7 1v14M1 7.500h12" stroke="#222" /><circle cx="11.500" cy="11.500" r="4.500" fill="#17a04b" /><path d="M9.500 11.500l1.500 1.500 2.500-3" fill="none" stroke="#fff" stroke-width="1.200" /></svg></button>
      <button aria-label="Hlasitost"><svg viewBox="0 0 16 16" fill="none" stroke="#fff"><path d="M.5 5.500H3L6.500 2v12L3 10.500H.5zM8.500 6c1 1 1 3 0 4M10.700 4c2 2.500 2 5.500 0 8M13 2c3 3.500 3 8.500 0 12" /></svg></button>
      <button aria-label="Síť"><svg viewBox="0 0 16 16" fill="none" stroke="#bbb"><path d="M2.500 14.500c0-6 5-11 11-11M5.500 14.500c0-4.500 3.500-8 8-8M8.500 14.500c0-3 2-5 5-5" /><path d="M.8 12C2 6 6 2 13 1.500" stroke="#777" /><circle cx="12.500" cy="13.500" r="1.300" fill="#fff" /></svg></button>
      <button aria-label="Kamera"><svg viewBox="0 0 16 16" fill="none" stroke="#fff"><path d="M3.500 5.500h7v6h-7zM10.500 8L13 6v5l-2.500-2M4 1.500c3-1 4.500-1 7 0M4 15c3 1 4.500 1 7 0" /></svg></button>
      <button class="lang">ENG</button>
      <button class="clock"><time>13:49</time><time>13.08.2023</time></button>
      <button class="notes" aria-label="Centrum akcí"><svg width="17" height="17" viewBox="0 0 17 17"><path d="M.5 1.500h16v12H11L8.500 16 6 13.500H.5z" fill="none" stroke="#fff" stroke-width="1.200" /></svg></button>
      <span class="desktop"></span>
    </div>
  </footer>
</body>
</html>
```
FILE: styles.css
```css
* { box-sizing: border-box; }
body {
  margin: 0;
  height: 100vh;
  overflow: hidden;
  display: flex; flex-direction: column;
  background: #202020; color: #fff;
  font: 12px/16px "Open Sans", "Noto Sans", sans-serif;
}
button, input {
  font: inherit; color: inherit;
  background: none; border: none;
  margin: 0; padding: 0;
}
button { display: flex; align-items: center; justify-content: center; white-space: nowrap; }
input { outline: none; min-width: 0; }
svg { flex: none; }
h1, h2, p { margin: 0; font-size: 12px; font-weight: normal; }
.defs { position: absolute; }
.i16 { width: 16px; height: 16px; }
.logo-text { font-family: "Open Sans", sans-serif; font-weight: bold; text-anchor: middle; }

.window { flex: 1; min-height: 0; display: flex; flex-direction: column; position: relative; }

/* title bar */
.titlebar { height: 23px; background: #2b2b2b; display: flex; align-items: center; }
.titlebar h1 { color: #a0a0a0; }
.bar { width: 3px; height: 12px; border: 1px solid #5c5c5c; margin: 0 5px; }
.quick { width: 22px; height: 22px; }
.quick-more { width: 16px; }
.controls { margin-left: auto; padding-right: 2px; display: flex; }
.controls button { width: 46px; height: 20px; }

/* ribbon tabs */
.tabs { height: 23px; background: #000; display: flex; font-size: 11px; }
.tab { width: 65px; }
.tab-file { width: 56px; background: #0063b1; }
.tab-active { width: 59px; background: #202020; }
.tab-wide { width: 80px; }
.tabs-end { margin-left: auto; padding-right: 3px; display: flex; align-items: center; gap: 9px; }
.help {
  width: 16px; height: 16px; border-radius: 50%;
  background: #0b6fd0; font-weight: bold;
}

.ribbon { height: 92px; border-top: 1px solid #2e2e2e; border-bottom: 1px solid #2e2e2e; display: flex; color: #c0c0c0; font-size: 11px; }
.group { padding: 4px 4px 0; display: flex; flex-direction: column; position: relative; }
.group::after { content: ""; position: absolute; top: 2px; right: 0; width: 1px; height: 72px; background: #3f3f3f; }
.group p { font-size: 11px; text-align: center; margin-top: 5px; color: #b4b4b4; }
.g-clipboard { width: 315px; }
.g-organize { width: 253px; }
.g-new { width: 166px; }
.g-open { width: 138px; }
.g-select { width: 118px; }
.tools { display: flex; height: 66px; }
.big { flex-direction: column; justify-content: flex-start; line-height: 13px; padding-top: 3px; }
.big > svg { width: 32px; height: 32px; margin-bottom: 4px; }
.big span { text-align: center; }
.on { color: #fff; }
.off { color: #a0a0a0; }
.w-pin { width: 104px; }
.w-copy { width: 50px; }
.w-paste { width: 44px; }
.w-move { width: 56px; }
.w-rename { width: 70px; }
.w-new { width: 42px; }
.w-props { width: 54px; }
.tri { width: 6px; height: 4px; color: #ddd; vertical-align: middle; }
.big:not(.on) .tri, .off .tri { color: #666; }
.split { width: 1px; height: 54px; background: #4a4a4a; margin: 4px 2px; }
.stack { display: flex; flex-direction: column; }
.small { height: 22px; justify-content: flex-start; gap: 4px; padding-left: 4px; }
.small > svg:first-child { width: 16px; height: 16px; }

/* address row */
.address { height: 43px; background: #191919; display: flex; align-items: center; padding: 6px 12px 7px 4px; }
.nav-buttons { display: flex; width: 102px; }
.nav-buttons button { width: 30px; }
.nav-buttons .recent { width: 18px; }
.nav-buttons .up { width: 24px; }
.path { flex: 1; height: 30px; border: 1px solid #535353; display: flex; align-items: center; padding-left: 2px; }
.path .sep { width: 8px; height: 8px; margin: 0 6px 0 7px; }
.path-end { margin-left: auto; display: flex; }
.path-end button { width: 30px; height: 28px; }
.filter { width: 342px; height: 30px; margin-left: 12px; border: 1px solid #535353; display: flex; align-items: center; gap: 13px; padding-left: 14px; color: #8a8a8a; }
.filter input { flex: 1; }
.filter input::placeholder { color: #7d7d7d; }

/* file list */
.content { flex: 1; min-height: 0; display: flex; }
.files { flex: 1; padding-left: 14px; overflow: hidden; }
table { table-layout: fixed; width: 602px; border-collapse: collapse; font-size: 11px; }
.c-name { width: 257px; }
.c-date { width: 144px; }
.c-type { width: 120px; }
.c-size { width: 77px; }
.c-end { width: 4px; }
th { height: 25px; padding: 0 0 0 7px; font-weight: normal; text-align: left; border-right: 1px solid #555; color: #dedede; position: relative; }
th:first-child { padding-left: 3px; }
.sort { position: absolute; top: 1px; left: 50%; width: 8px; height: 5px; margin-left: -4px; }
td { height: 21px; padding: 0 0 0 7px; color: #dedede; white-space: nowrap; }
td:first-child { padding-left: 5px; color: #fff; font-size: 12px; }
td:first-child svg { width: 14px; height: 16px; margin-right: 5px; vertical-align: -3px; }
td:nth-child(4) { text-align: right; padding-right: 4px; }
.selected td { background: #4d4d4d; }

.scrollbar { width: 17px; background: #171717; display: flex; flex-direction: column; align-items: center; padding: 4px 0; gap: 4px; }
.scrollbar svg { width: 9px; height: 9px; }
.track { flex: 1; width: 100%; padding-left: 1px; }
.thumb { height: 36%; position: relative; top: 36%; background: #4d4d4d; }

.status { height: 23px; background: #333; display: flex; justify-content: flex-end; padding-right: 4px; }
.view { width: 22px; }
.view-active { background: #666; border: 1px solid #838383; }

/* start menu */
.start {
  position: absolute; left: 0; bottom: 0;
  width: 648px; height: 629px;
  overflow: hidden;
  background: #272727;
  box-shadow: 0 0 6px rgba(0, 0, 0, 0.5);
}
.start-inner { height: calc(100% + 11px); display: flex; padding-top: 4px; }
.rail { width: 48px; display: flex; flex-direction: column; }
.rail button { width: 50px; height: 48px; }
.rail .menu { margin-bottom: auto; }
.apps { width: 276px; padding: 20px 16px 0; }
.apps h2 { height: 36px; line-height: 38px; }
.app { width: 100%; height: 37px; justify-content: flex-start; gap: 8px; }
.app > svg:first-child { width: 24px; height: 24px; }
.app .more { width: 10px; height: 10px; margin-left: auto; margin-right: 9px; color: #bbb; }
.letter { width: 24px; height: 39px; padding-top: 2px; }
.tiles { padding-top: 15px; }
.tiles h2 { height: 47px; line-height: 50px; }
.tile-grid { display: grid; grid-template-columns: repeat(3, 100px); grid-auto-rows: 100px; gap: 8px 4px; }
.col-1 { grid-column: 1; }
.col-2 { grid-column: 2; }
.col-3 { grid-column: 3; }
.tile { display: grid; grid-template: 100px / 100px; justify-content: start; place-items: center; background: #3c3c3c; }
.tile > * { grid-area: 1 / 1; }
.tile > svg { width: 32px; height: 32px; }
.tile > span { place-self: end start; padding: 0 0 4px 8px; }
.wide-icon > svg { width: 48px; height: 64px; }
.folder-tile { grid-template: repeat(3, 33px) / repeat(3, 33px); }
.folder-tile > *, .fun-tile > * { grid-area: auto; }
.folder-tile > svg { width: 17px; height: 17px; }
.fun-tile { grid-template: 33px 34px 33px / 33px 34px 33px; }
.fun-tile > svg { width: 34px; height: 34px; }
.fun-tile > span { grid-column: 1 / 4; }

/* taskbar */
.taskbar { height: 40px; display: flex; background: linear-gradient(90deg, #26292b, #333230 35%, #272829 55%, #2b2b2b); }
.win { width: 48px; background: #4d4e50; }
.find { width: 288px; background: #fff; border: 2px solid #0078d7; display: flex; align-items: center; gap: 10px; padding-left: 10px; color: #111; }
.find input { flex: 1; height: 21px; font-size: 15px; border-left: 1px solid #000; }
.find input::placeholder { color: #222; }
.tasks { display: flex; padding-left: 7px; }
.task { width: 152px; padding: 2px 0 0 6px; gap: 4px; justify-content: flex-start; border-bottom: 2px solid #76b9ed; }
.task svg { width: 24px; height: 24px; }
.task-pin { width: 58px; padding-left: 17px; border-bottom-color: transparent; }
.task-last { margin-left: 9px; }
.tray { margin-left: auto; display: flex; }
.tray button { width: 24px; }
.tray button svg { width: 16px; height: 16px; }
.tray .lang { width: 36px; }
.tray .clock { width: 66px; flex-direction: column; font-size: 11px; line-height: 18px; }
.tray .notes { width: 40px; }
.tray .notes svg { width: 17px; height: 17px; }
.desktop { width: 5px; border-left: 1px solid #777; margin-left: 8px; }
```
